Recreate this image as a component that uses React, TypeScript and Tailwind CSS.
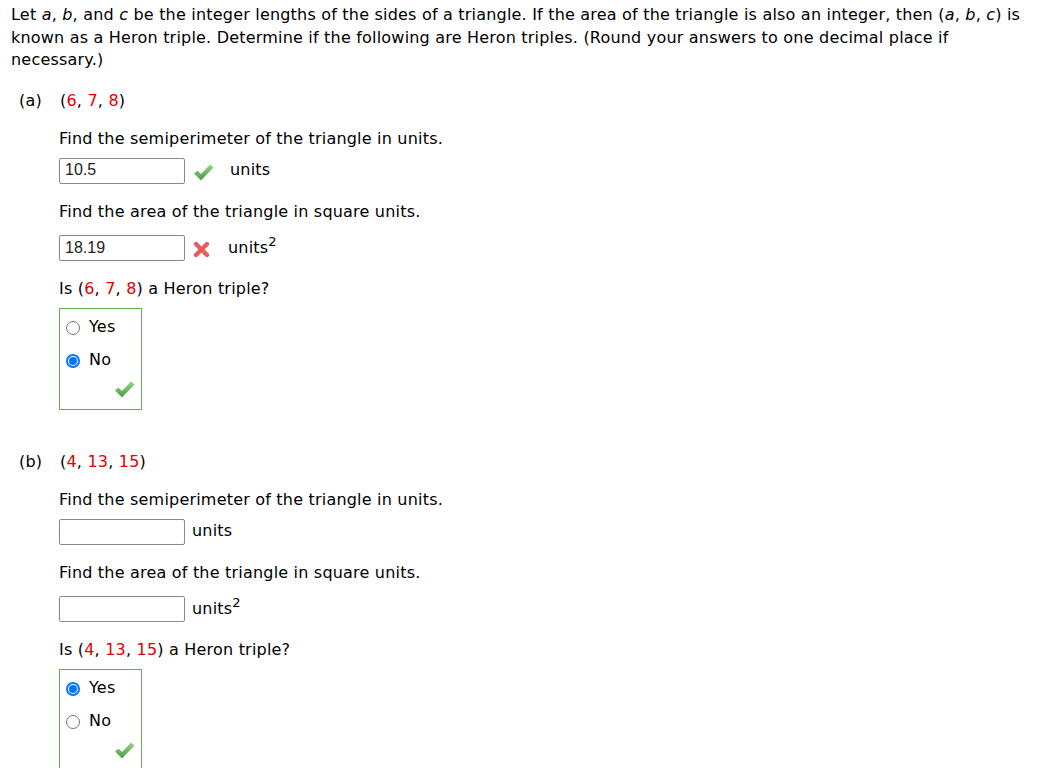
import React from 'react';

const red = 'text-[#e00000]';

function Check({ className = '' }: { className?: string }) {
  return (
    <svg width="21" height="18" viewBox="0 0 21 18" className={className}>
      <defs>
        <linearGradient id="chk" x1="0" y1="0" x2="0" y2="1">
          <stop offset="0" stopColor="#94d488" />
          <stop offset="1" stopColor="#4a9e45" />
        </linearGradient>
      </defs>
      <path d="M1 10.5 L4.5 7.5 L8 11 L17 1.5 L20.5 4.5 L8 17.5 Z" fill="url(#chk)" />
    </svg>
  );
}

function Cross() {
  return (
    <svg width="17" height="17" viewBox="0 0 17 17">
      <path d="M3 3 L14 14 M14 3 L3 14" stroke="#ec5a5f" strokeWidth="4.4" strokeLinecap="round" />
    </svg>
  );
}

function Triple({ nums }: { nums: string[] }) {
  return (
    <span>
      (
      {nums.map((n, i) => (
        <span key={i}>
          <span className={red}>{n}</span>
          {i < nums.length - 1 ? ', ' : ''}
        </span>
      ))}
      )
    </span>
  );
}

function Field({ value, status, sq }: { value: string; status?: 'ok' | 'bad'; sq?: boolean }) {
  return (
    <div className="flex items-center h-[26px]">
      <div className="w-[126px] h-[26px] border border-[#8a8a8a] rounded-[2px] px-[5px] flex items-center text-[16px] tracking-normal text-[#222] font-['Liberation_Sans',Arial,sans-serif]">
        {value}
      </div>
      {status === 'ok' && <Check className="ml-[8px] mr-[16px] mt-[2px]" />}
      {status === 'bad' && <span className="ml-[8px] mr-[18px] mt-[2px] flex"><Cross /></span>}
      <span className={status ? '' : 'ml-[7px]'}>
        units{sq && <sup className="text-[13px] top-[-7px]">2</sup>}
      </span>
    </div>
  );
}

function Radio({ checked }: { checked: boolean }) {
  return checked ? (
    <span className="w-[14px] h-[14px] rounded-full border-2 border-[#0075ff] flex items-center justify-center">
      <span className="w-[8px] h-[8px] rounded-full bg-[#0075ff]" />
    </span>
  ) : (
    <span className="w-[14px] h-[14px] rounded-full border border-[#767676] bg-white" />
  );
}

function Choice({ yes }: { yes: boolean }) {
  return (
    <div className="w-[83px] h-[102px] border border-[#6aa84f] mt-[7px] pl-[6px] pt-[8px] relative">
      <div className="flex items-center gap-[9px] h-[22px]">
        <Radio checked={yes} />
        <span>Yes</span>
      </div>
      <div className="flex items-center gap-[9px] h-[22px] mt-[11px]">
        <Radio checked={!yes} />
        <span>No</span>
      </div>
      <Check className="absolute right-[6px] bottom-[11px]" />
    </div>
  );
}

function Part({
  label,
  nums,
  semi,
  area,
  yes,
}: {
  label: string;
  nums: string[];
  semi: { value: string; status?: 'ok' | 'bad' };
  area: { value: string; status?: 'ok' | 'bad' };
  yes: boolean;
}) {
  return (
    <div>
      <div className="flex">
        <span className="ml-[8px] w-[41px]">({label})</span>
        <Triple nums={nums} />
      </div>
      <div className="ml-[48px]">
        <p className="mt-[16px]">Find the semiperimeter of the triangle in units.</p>
        <div className="mt-[7px]">
          <Field value={semi.value} status={semi.status} />
        </div>
        <p className="mt-[17px]">Find the area of the triangle in square units.</p>
        <div className="mt-[12px]">
          <Field value={area.value} status={area.status} sq />
        </div>
        <p className="mt-[17px]">
          Is <Triple nums={nums} /> a Heron triple?
        </p>
        <Choice yes={yes} />
      </div>
    </div>
  );
}

export default function App() {
  return (
    <div className="min-h-screen bg-white text-black px-[11px] pt-[4px] text-[16px] tracking-[0.2px] leading-[22.5px] font-['DejaVu_Sans',Verdana,sans-serif]">
      <p className="pr-[6px]">
        Let <i>a</i>, <i>b</i>, and <i>c</i> be the integer lengths of the sides of a triangle. If the area of the
        triangle is also an integer, then (<i>a</i>, <i>b</i>, <i>c</i>) is known as a Heron triple. Determine if the
        following are Heron triples. (Round your answers to one decimal place if necessary.)
      </p>
      <div className="mt-[18px]">
        <Part
          label="a"
          nums={['6', '7', '8']}
          semi={{ value: '10.5', status: 'ok' }}
          area={{ value: '18.19', status: 'bad' }}
          yes={false}
        />
      </div>
      <div className="mt-[41px]">
        <Part label="b" nums={['4', '13', '15']} semi={{ value: '' }} area={{ value: '' }} yes={true} />
      </div>
    </div>
  );
}
